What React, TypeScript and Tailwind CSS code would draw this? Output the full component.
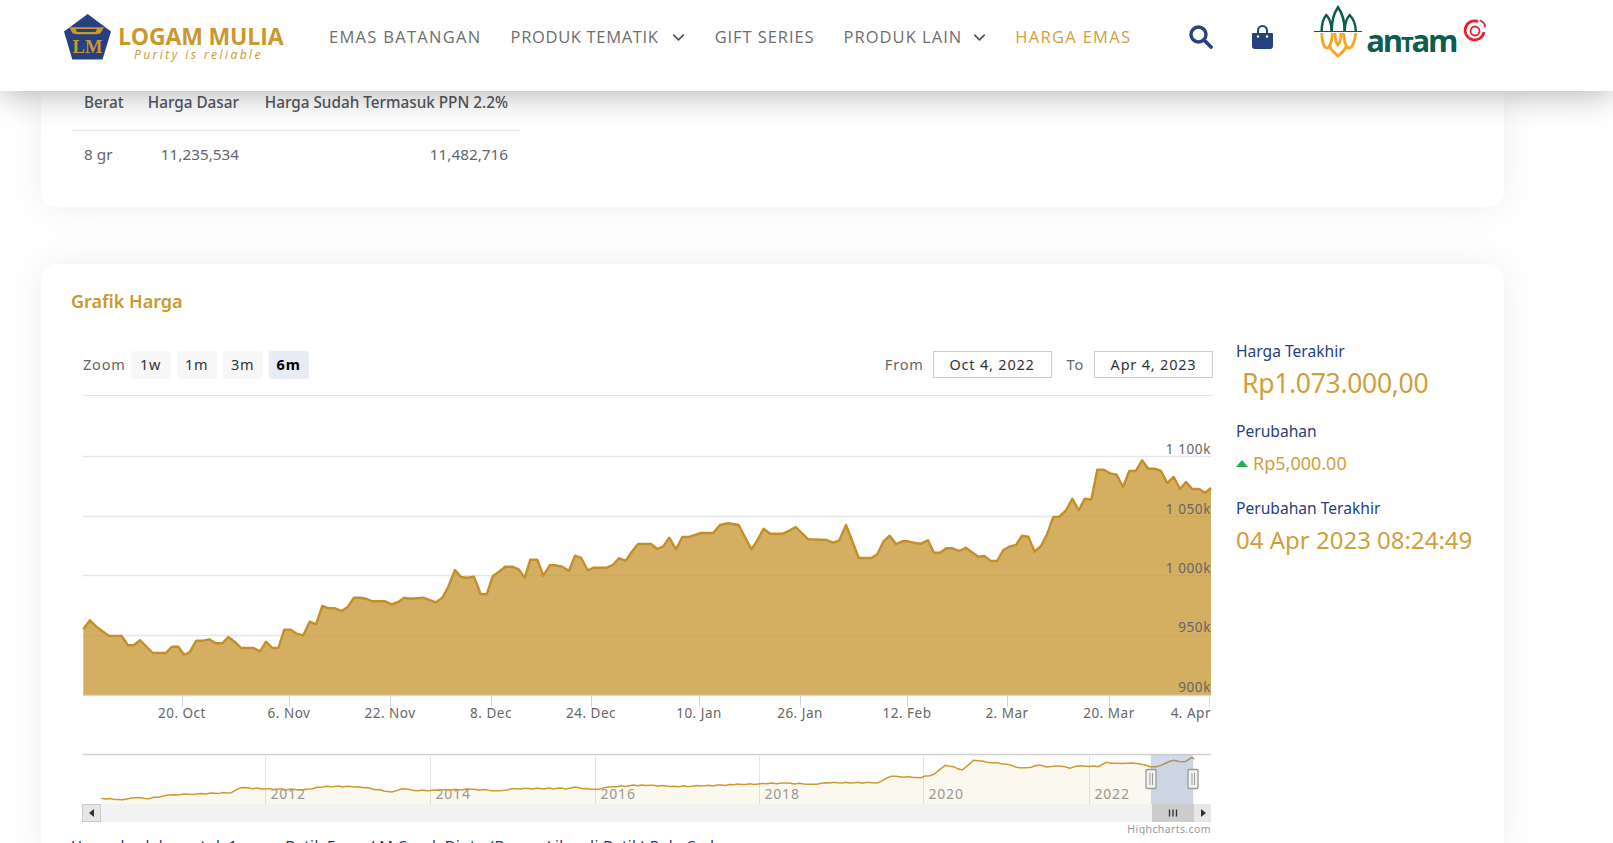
import { ChevronDown } from "lucide-react";

// line of the area chart, read in three pieces
const partA = [[40,265],[60,238],[80,258],[117,285],[155,285],[174,313],[191,313],[210,298],[248,336],[288,336],[305,317],[325,317],[343,342],[360,332],[379,299],[400,299],[418,295],[437,307],[457,307],[475,288],[495,303],[514,321],[550,321],[570,331],[588,302],[607,321],[625,321],[643,266],[662,266],[680,278],[700,283],[719,242],[738,250],[757,195],[776,202],[795,202],[815,210],[833,198],[852,170],[870,170],[888,173],[907,181],[945,181],[965,190],[985,183],[1003,170],[1022,173],[1060,170],[1098,184],[1117,170],[1135,137],[1155,87],[1173,108]];
const partB = [[20,200],[42,197],[62,250],[80,250],[98,196],[117,182],[136,167],[157,167],[176,175],[194,200],[211,146],[232,146],[250,194],[269,163],[288,163],[307,167],[327,179],[345,134],[364,141],[383,178],[402,170],[440,170],[458,162],[477,142],[497,149],[515,123],[534,99],[573,99],[591,114],[610,106],[628,80],[648,115],[667,78],[690,77],[723,66],[760,66],[780,42],[805,37],[836,42],[874,115],[892,88],[911,53],[930,68],[968,68],[990,58],[1007,48],[1045,85]];
const partC = [[80,357],[100,365],[118,358],[138,312],[157,360],[176,411],[214,411],[232,400],[250,362],[269,344],[288,369],[307,361],[325,361],[345,366],[363,368],[384,358],[402,395],[420,395],[439,382],[458,382],[478,390],[497,380],[535,407],[553,405],[572,420],[591,420],[610,387],[628,377],[648,372],[666,344],[685,347],[704,392],[723,375],[741,340],[760,288],[778,287],[798,268],[817,233],[836,268],[854,233],[874,236],[892,146],[911,146],[930,157],[950,161],[969,198],[988,150],[1007,150],[1026,118],[1045,143],[1064,143],[1083,150],[1102,186],[1121,168],[1140,204],[1158,183],[1177,204],[1198,204],[1215,216],[1233,201]];

const mainLine = [
  ...partA.map(([x, y]) => [70 + x / 3, 540 + y / 3]),
  ...partB.map(([x, y]) => [460 + x / 3, 510 + y / 3]),
  ...partC.map(([x, y]) => [800 + x / 3, 420 + y / 3]),
];

const navA = [[48,142],[80,146],[100,140],[120,143],[150,132],[180,130],[220,127],[245,125],[260,110],[297,114],[355,116],[390,106],[440,107],[490,123],[505,113],[530,119],[610,115],[650,119],[680,113],[760,112],[770,108],[780,113],[805,115],[820,108],[870,102],[920,106],[960,105],[1010,101],[1060,98],[1090,96],[1130,100],[1150,95],[1230,95],[1250,76],[1295,80],[1315,70],[1332,43],[1345,47],[1358,57],[1375,28],[1405,35]];
const navB = [[20,130],[60,140],[80,140],[120,132],[140,138],[180,135],[210,142],[240,134],[295,137],[318,124],[350,127],[380,127],[415,128],[450,137],[470,137],[520,118],[555,122],[575,110],[583,113]];

const navBase = [
  ...navA.map(([x, y]) => [70 + x / 1.522, 750 + y / 3]),
  ...navB.map(([x, y]) => [1000 + x / 3, 720 + y / 3]),
];

const navLine: number[][] = [];
navBase.forEach(([x, y], i) => {
  navLine.push([x, y]);
  const next = navBase[i + 1];
  if (!next) return;
  const steps = Math.floor((next[0] - x) / 4);
  for (let s = 1; s < steps; s++) {
    const t = s / steps;
    navLine.push([x + (next[0] - x) * t, y + (next[1] - y) * t + Math.sin(s * 2.3 + i) * 0.5]);
  }
});

const toPath = (pts: number[][]) => pts.map(([x, y], i) => `${i ? "L" : "M"}${x.toFixed(1)} ${y.toFixed(1)}`).join(" ");

const yLabels = [
  { t: "1 100k", y: 453 },
  { t: "1 050k", y: 513 },
  { t: "1 000k", y: 572 },
  { t: "950k", y: 631 },
  { t: "900k", y: 691 },
];
const gridY = [455.5, 515.5, 574.5, 634.5];
const xLabels = [
  { t: "20. Oct", x: 182 },
  { t: "6. Nov", x: 289 },
  { t: "22. Nov", x: 390 },
  { t: "8. Dec", x: 491 },
  { t: "24. Dec", x: 591 },
  { t: "10. Jan", x: 699 },
  { t: "26. Jan", x: 800 },
  { t: "12. Feb", x: 907 },
  { t: "2. Mar", x: 1007 },
  { t: "20. Mar", x: 1109 },
];
const navYears = [
  { t: "2012", x: 265.5 },
  { t: "2014", x: 430.5 },
  { t: "2016", x: 595.5 },
  { t: "2018", x: 759.5 },
  { t: "2020", x: 923.5 },
  { t: "2022", x: 1089.5 },
];

function LogamLogo() {
  return (
    <div className="flex w-[219px] items-center gap-[7px]">
      <svg width="47" height="46" viewBox="0 0 47 46" className="shrink-0">
        <path d="M23.7 0 47 17.5 38.5 45.5H8.3L0 17.5Z" fill="#27407f" />
        <path d="M5.3 13.3h34.7l-3.500 6-3.500 1H12l-3.500-1Z" fill="#c9982f" />
        <path d="M11.500 15h21.500l-1.500 3H13Z" fill="#27407f" />
        <text x="23.500" y="39" textAnchor="middle" fill="#c9982f" className="font-['Liberation_Serif',serif] text-[18.500px] font-bold">LM</text>
      </svg>
      <div className="flex flex-col pt-[12px] font-['Open_Sans',sans-serif] text-[#c9982f]">
        <span className="whitespace-nowrap text-[23px] leading-[24px] font-bold tracking-[-0.150px]">LOGAM MULIA</span>
        <span className="ml-[16px] whitespace-nowrap text-[12px] leading-[14px] tracking-[2.450px] italic">Purity is reliable</span>
      </div>
    </div>
  );
}

function AntamLogo() {
  return (
    <div className="ml-[41px] flex h-[60px] items-start">
      <svg width="50" height="60" viewBox="0 0 50 60" className="-mt-[3px] shrink-0">
        <g fill="none" stroke="#0d5c4d" strokeWidth="2.500">
          <path d="M7.700 27C7.700 19 9.500 14 12.300 11 15 14 17.700 19 17.700 27" />
          <path d="M17.700 27C17.700 17 20 9 24 3.300 28 9 30.700 17 30.700 27" />
          <path d="M30.700 27C30.700 19 33 14 35.700 11 38.500 14 41.700 19 41.700 27" />
        </g>
        <path d="M0 27.500h48" stroke="#0d5c4d" strokeWidth="1.200" />
        <g fill="none" stroke="#f5a623" strokeWidth="2.800">
          <path d="M7.700 29C8 38 10 44 13 44 16 44 18 36 18.500 29" />
          <path d="M41.700 29C41 38 38 44 35 44 32 44 30 36 29.500 29" />
          <path d="M15 41C17 47 21 49 24 52 27 49 31 47 33 41" />
          <path d="M21 29C21 35 22 39 24 41 26 39 27 35 27 29" />
        </g>
      </svg>
      <span className="mt-[13px] ml-[2px] font-['Open_Sans',sans-serif] text-[31px] leading-[40px] font-bold tracking-[-2.200px] text-[#0d5c4d]">
        an<span className="[font-variant-caps:all-small-caps]">t</span>am
      </span>
      <svg width="24" height="26" viewBox="0 0 24 26" className="mt-[11px] ml-[7px] shrink-0">
        <path d="M15 3.500A9.500 9.500 0 1 0 21 14" fill="none" stroke="#e4202c" strokeWidth="2.800" />
        <path d="M17 2.500c3 1 5 3.500 5 6.500" fill="none" stroke="#e4202c" strokeWidth="1.800" />
        <circle cx="12" cy="13" r="4.500" fill="none" stroke="#e4202c" strokeWidth="1.800" />
      </svg>
    </div>
  );
}

function Header() {
  return (
    <header className="relative z-10 flex h-[91px] shrink-0 items-center bg-white pb-[17px] pl-[64px] shadow-[0_2px_34px_rgba(0,0,0,0.32)]">
      <LogamLogo />
      <nav className="ml-[46px] flex items-center gap-[29px] font-['Open_Sans',sans-serif] text-[16.500px] whitespace-nowrap text-[#6e6e6e]">
        <a className="tracking-[1.300px]">EMAS BATANGAN</a>
        <a className="flex items-center gap-[10px] tracking-[0.670px]">
          PRODUK TEMATIK <ChevronDown size={19} strokeWidth={2.200} className="-mr-[2px] text-[#555]" />
        </a>
        <a className="tracking-[0.930px]">GIFT SERIES</a>
        <a className="flex items-center gap-[8px] tracking-[1.030px]">
          PRODUK LAIN <ChevronDown size={19} strokeWidth={2.200} className="-mr-[3px] text-[#555]" />
        </a>
        <a className="tracking-[1.300px] text-[#cf9f3e]">HARGA EMAS</a>
      </nav>
      <svg width="24" height="24" viewBox="0 0 24 24" className="ml-[58px] shrink-0">
        <circle cx="9.500" cy="9.500" r="7.500" fill="none" stroke="#27407f" strokeWidth="3.400" />
        <path d="M15 15l7 7" stroke="#27407f" strokeWidth="3.800" strokeLinecap="round" />
      </svg>
      <svg width="21" height="24" viewBox="0 0 21 24" className="ml-[39px] shrink-0">
        <path d="M1 8h19a1 1 0 0 1 1 1v12a3 3 0 0 1-3 3H3a3 3 0 0 1-3-3V9a1 1 0 0 1 1-1Z" fill="#27407f" />
        <path d="M6 11V5.500a4.500 4.500 0 0 1 9 0V11" fill="none" stroke="#27407f" strokeWidth="2" />
        <circle cx="6" cy="11.500" r="1.200" fill="#fff" />
        <circle cx="15" cy="11.500" r="1.200" fill="#fff" />
      </svg>
      <AntamLogo />
    </header>
  );
}

function PriceTable() {
  return (
    <section className="ml-[41px] h-[116px] w-[1463px] shrink-0 rounded-b-2xl bg-white pl-[30px] shadow-[0_0_40px_rgba(0,0,0,0.07)]">
      <table className="w-[450px] table-fixed border-collapse text-[15.300px] text-[#63666b]">
        <colgroup>
          <col className="w-[66px]" />
          <col className="w-[115px]" />
          <col />
        </colgroup>
        <thead>
          <tr className="h-[39px] border-b border-[#e9e9e9]">
            <th className="pb-[15px] pl-[13px] text-left font-medium text-[#55585e]">Berat</th>
            <th className="pr-[13px] pb-[15px] text-right font-medium text-[#55585e]">Harga Dasar</th>
            <th className="pr-[13px] pb-[15px] text-right font-medium text-[#55585e]">Harga Sudah Termasuk PPN 2.2%</th>
          </tr>
        </thead>
        <tbody>
          <tr className="h-[49px]">
            <td className="pl-[13px] text-left">8 gr</td>
            <td className="pr-[13px] text-right">11,235,534</td>
            <td className="pr-[13px] text-right">11,482,716</td>
          </tr>
        </tbody>
      </table>
    </section>
  );
}

function RangeSelector() {
  const btn = "flex h-[28px] w-[40px] items-center justify-center rounded-[3px] bg-[#f7f7f7] text-[#333]";
  const input = "flex h-[27px] w-[119px] items-center justify-center border-[1.500px] border-[#cfcfcf] text-[#333]";
  return (
    <div className="ml-[12px] flex h-[45px] w-[1130px] items-start justify-between border-b border-[#e4e4e4] text-[14.500px] tracking-[0.800px]">
      <div className="flex items-center">
        <span className="mr-[5px] text-[#666]">Zoom</span>
        <div className="flex gap-[6px]">
          <span className={btn}>1w</span>
          <span className={btn}>1m</span>
          <span className={btn}>3m</span>
          <span className="flex h-[28px] w-[40px] items-center justify-center rounded-[3px] bg-[#e6ebf5] font-bold text-black">6m</span>
        </div>
      </div>
      <div className="flex items-center">
        <span className="mr-[9px] text-[#666]">From</span>
        <span className={input}>Oct 4, 2022</span>
        <span className="mr-[10px] ml-[15px] text-[#666]">To</span>
        <span className={input}>Apr 4, 2023</span>
      </div>
    </div>
  );
}

function PriceChart() {
  const last = mainLine[mainLine.length - 1];
  const lastNav = navLine[navLine.length - 1];
  return (
    <svg width="1150" height="439" viewBox="71 395 1150 439" className="block font-['Noto_Sans',sans-serif]">
      {gridY.map((y) => (
        <path key={y} d={`M83 ${y}H1211`} stroke="#e6e6e6" strokeWidth="1.500" />
      ))}
      <path d={`${toPath(mainLine)} L${last[0]} 694 L83.300 694 Z`} fill="#c6962f" fillOpacity="0.76" />
      <path d={toPath(mainLine)} fill="none" stroke="#c48f28" strokeWidth="2.400" strokeLinejoin="round" />
      <path d="M83 694.500H1211" stroke="#ccd6eb" strokeWidth="1.500" />
      {[...xLabels.map((l) => l.x), 1209].map((x) => (
        <path key={x} d={`M${x + 0.5} 695V706`} stroke="#ccd6eb" />
      ))}
      {yLabels.map((l) => (
        <text key={l.t} x="1211" y={l.y} textAnchor="end" fill="#666" className="text-[13.500px] tracking-[0.600px]">{l.t}</text>
      ))}
      {xLabels.map((l) => (
        <text key={l.t} x={l.x} y="717" textAnchor="middle" fill="#666" className="text-[13.500px] tracking-[0.500px]">{l.t}</text>
      ))}
      <text x="1211" y="717" textAnchor="end" fill="#666" className="text-[13.500px] tracking-[0.500px]">4. Apr</text>

      {/* navigator */}
      <path d="M83 753.500H1211" stroke="#cfcfcf" strokeWidth="1.500" />
      {navYears.map((l) => (
        <g key={l.t}>
          <path d={`M${l.x} 754V803`} stroke="#e6e6e6" />
          <text x={l.x + 5} y="798" fill="#999" className="text-[14px] tracking-[0.800px]">{l.t}</text>
        </g>
      ))}
      <path d={`${toPath(navLine)} L${lastNav[0]} 803 L${navLine[0][0]} 803 Z`} fill="#c6962f" fillOpacity="0.07" />
      <path d={toPath(navLine)} fill="none" stroke="#cb9b33" strokeWidth="1.500" />
      <rect x="1151" y="754" width="42" height="49" fill="#6685c2" fillOpacity="0.3" />
      <rect x="1146" y="768.500" width="10" height="19" rx="1" fill="#f2f2f2" stroke="#999" strokeWidth="1.300" />
      <path d="M1150 772V784M1152.500 772V784" stroke="#999" />
      <rect x="1188" y="768.500" width="10" height="19" rx="1" fill="#f2f2f2" stroke="#999" strokeWidth="1.300" />
      <path d="M1192 772V784M1194.500 772V784" stroke="#999" />

      {/* scrollbar */}
      <rect x="82" y="803" width="1129" height="18" fill="#f2f2f2" />
      <rect x="82.500" y="803.500" width="18" height="17" fill="#e6e6e6" stroke="#ccc" />
      <path d="M94 808v8l-5-4Z" fill="#333" />
      <rect x="1152" y="803" width="42" height="18" fill="#ccc" />
      <path d="M1169.500 808.500v7M1173 808.500v7M1176.500 808.500v7" stroke="#333" strokeWidth="1.300" />
      <rect x="1194" y="803" width="17" height="18" fill="#e6e6e6" />
      <path d="M1201 808v8l5-4Z" fill="#333" />

      <text x="1211" y="832" textAnchor="end" fill="#999" className="text-[10.500px] tracking-[0.400px]">Highcharts.com</text>
    </svg>
  );
}

function SidePanel() {
  return (
    <aside className="ml-[15px] flex-1 font-['Noto_Sans',sans-serif]">
      <div className="-mt-[1px] text-[15.600px] leading-[22px] text-[#27407f]">Harga Terakhir</div>
      <div className="mt-[2px] ml-[6px] text-[26.500px] leading-[38px] tracking-[-0.300px] text-[#cf9f3e]">Rp1.073.000,00</div>
      <div className="mt-[18px] text-[15.600px] leading-[22px] text-[#27407f]">Perubahan</div>
      <div className="mt-[9px] flex h-[24px] items-center text-[18px] text-[#cf9f3e]">
        <span className="mr-[5px] h-0 w-0 border-x-[6px] border-b-[7px] border-x-transparent border-b-[#1fae54]" />
        Rp5,000.00
      </div>
      <div className="mt-[22px] text-[15.600px] leading-[22px] text-[#27407f]">Perubahan Terakhir</div>
      <div className="mt-[5px] text-[24px] leading-[32px] whitespace-nowrap text-[#cf9f3e]">04 Apr 2023 08:24:49</div>
    </aside>
  );
}

export default function App() {
  return (
    <div className="flex h-[843px] w-full flex-col overflow-hidden bg-white font-['Noto_Sans',sans-serif]">
      <Header />
      <PriceTable />
      <section className="mt-[57px] ml-[41px] w-[1463px] flex-1 rounded-t-2xl bg-white px-[30px] pt-[25px] shadow-[0_0_40px_rgba(0,0,0,0.07)]">
        <h2 className="text-[18px] leading-[24px] font-semibold text-[#c9982f]">Grafik Harga</h2>
        <div className="mt-[28px] flex">
          <div className="w-[1150px] shrink-0 pt-[10px]">
            <RangeSelector />
            <PriceChart />
            <a className="mt-[1px] block text-[15px] leading-[18px] tracking-[0.400px] whitespace-nowrap text-[#1f3470]">
              Harga berlaku untuk 1 gram Batik Emas LM Corak Dinto (Bunga Liburdi Batik) Pola Cad
            </a>
          </div>
          <SidePanel />
        </div>
      </section>
    </div>
  );
}
